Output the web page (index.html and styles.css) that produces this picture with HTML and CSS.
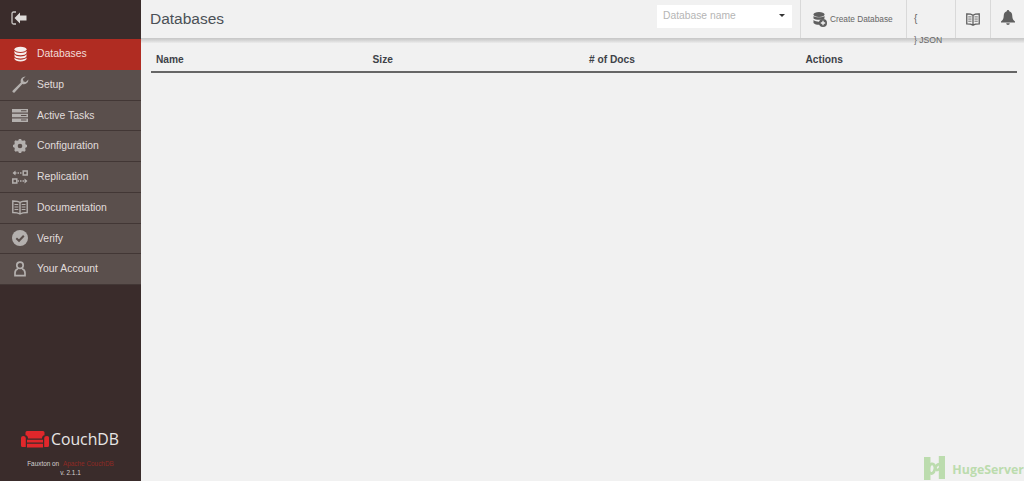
FILE: index.html
```html
<!DOCTYPE html>
<html lang="en">
<head>
<meta charset="utf-8">
<title>Databases</title>
<link rel="stylesheet" href="styles.css">
</head>
<body>
<div class="app">
  <aside class="sidebar">
    <div class="side-top">
      <svg class="collapse" width="16" height="14" viewBox="0 0 16 14"><path d="M5 1H2.500A1.500 1.500 0 0 0 1 2.500V11.500A1.500 1.500 0 0 0 2.500 13H5" fill="none" stroke="#c9c5c3" stroke-width="1.300"/><path d="M3.500 7L9 1.500V4.500H15.500V9.500H9V12.500Z" fill="#dedbd9"/></svg>
    </div>
    <nav class="nav">
      <a class="nav-item active"><span class="nav-icon"><svg width="13" height="16" viewBox="0 0 14 16" fill="#f6eeec"><ellipse cx="7" cy="3" rx="6.500" ry="2.800"/><path d="M.5 4.600C1.500 6.400 4 7 7 7s5.500-.6 6.500-2.400V7c-.6 1.800-3.400 2.400-6.500 2.400S1.100 8.800.5 7Z"/><path d="M.5 8.400C1.500 10.100 4 10.700 7 10.700s5.500-.6 6.500-2.300V10.500c-.6 1.800-3.400 2.400-6.500 2.400S1.100 12.300.5 10.500Z"/><path d="M.5 11.900C1.500 13.500 4 14.100 7 14.100s5.500-.6 6.500-2.200V13.400C13 15 10.100 16 7 16S1 15 .5 13.400Z"/></svg></span>Databases</a>
      <a class="nav-item"><span class="nav-icon"><svg width="17" height="17" viewBox="0 0 17 17" fill="#b4b0ae"><path d="M16.500 3.500a4.700 4.700 0 0 1-6.100 4.500L2.800 16.200a1.300 1.300 0 0 1-2-1.700L8.900 6.600A4.700 4.700 0 0 1 13.600.4L10.900 3.100l.6 2.400 2.300.6Z"/></svg></span>Setup</a>
      <a class="nav-item"><span class="nav-icon"><svg width="16" height="13" viewBox="0 0 16 13"><path fill="#b4b0ae" d="M0 0H16V3.600H0ZM0 4.700H16V8.300H0ZM0 9.400H16V13H0Z"/><path fill="#5a4f4c" d="M9 1.200H14.500V2.200H9ZM9 5.900H14.500V6.900H9ZM9 10.600H14.500V11.600H9Z"/></svg></span>Active Tasks</a>
      <a class="nav-item"><span class="nav-icon"><svg width="14" height="14" viewBox="0 0 14 14"><circle cx="7" cy="7" r="4.300" fill="none" stroke="#b4b0ae" stroke-width="3.400"/><path d="M7 0V14M0 7H14M2 2L12 12M12 2L2 12" stroke="#b4b0ae" stroke-width="2.600"/><circle cx="7" cy="7" r="2.300" fill="#5a4f4c"/></svg></span>Configuration</a>
      <a class="nav-item"><span class="nav-icon"><svg width="16" height="14" viewBox="0 0 16 14" fill="none" stroke="#b4b0ae" stroke-width="1.500"><rect x="11.200" y="1" width="4" height="4"/><rect x=".8" y="9" width="4" height="4"/><path d="M3 3H10M5.500 11H13" stroke-dasharray="1.500 1"/><path d="M3.500 .6L.5 3l3 2.400ZM12.500 8.600l3 2.400-3 2.400Z" fill="#b4b0ae" stroke="none"/></svg></span>Replication</a>
      <a class="nav-item"><span class="nav-icon"><svg width="16" height="15" viewBox="0 0 16 15" fill="none" stroke="#b4b0ae" stroke-width="1.400"><path d="M8 2.500C6 1 3 1 .8 1V12.500C3 12.500 6 12.700 8 14 10 12.700 13 12.500 15.200 12.500V1C13 1 10 1 8 2.500ZM8 2.500V14"/><path stroke-width="1" d="M2.500 4.500H6.300M2.500 7H6.300M2.500 9.500H6.300M9.700 4.500H13.500M9.700 7H13.500M9.700 9.500H13.500"/></svg></span>Documentation</a>
      <a class="nav-item"><span class="nav-icon"><svg width="16" height="16" viewBox="0 0 16 16"><circle cx="8" cy="8" r="8" fill="#b4b0ae"/><path d="M4.300 8.300L7 10.800 11.800 5.700" fill="none" stroke="#5a4f4c" stroke-width="2"/></svg></span>Verify</a>
      <a class="nav-item"><span class="nav-icon"><svg width="12" height="16" viewBox="0 0 12 16" fill="none" stroke="#b4b0ae" stroke-width="1.700"><circle cx="6" cy="4.300" r="3.200"/><path d="M4 7.800C2 8.400 1 9.800 1 12V14.700H11V12C11 9.800 10 8.400 8 7.800"/></svg></span>Your Account</a>
    </nav>
    <div class="side-foot">
      <div class="logo">
        <svg width="28" height="17" viewBox="0 0 28 17" fill="#e0272b"><path d="M4.500 1.500Q4.500 0 6 0H22Q23.500 0 23.500 1.500V4.200Q21 4.500 21 7.500H7Q7 4.500 4.500 4.200Z"/><path d="M0 7Q0 5 2.300 5T4.800 7V16H1.500Q0 16 0 14.500ZM23.200 7Q23.200 5 25.700 5T28 7V14.500Q28 16 26.500 16H23.200Z"/><path d="M6 8.800H22V11.500H6ZM6 12.700H22V16.500H6Z"/></svg>
        <span class="logo-text">CouchDB</span>
      </div>
      <div class="credit">Fauxton on <a class="credit-link">Apache CouchDB</a></div>
      <div class="credit">v. 2.1.1</div>
    </div>
  </aside>
  <main class="main">
    <header class="topbar">
      <h1 class="title">Databases</h1>
      <div class="db-select"><span class="db-placeholder">Database name</span><i class="caret"></i></div>
      <div class="tool create"><svg width="14" height="15" viewBox="0 0 14 15"><g fill="#5f5f5f"><ellipse cx="6" cy="2.500" rx="5.500" ry="2.400"/><path d="M.5 4C2 5.800 10 5.800 11.500 4V6.500C10 8.300 2 8.300 .5 6.500ZM.5 8C2 9.800 6 9.800 7 9.600V12.800C5 13 1.500 12.500 .5 11Z"/><circle cx="10" cy="11" r="4"/></g><path d="M10 8.800V13.200M7.800 11H12.200" stroke="#f1f1f1" stroke-width="1.300"/></svg><span>Create Database</span></div>
      <div class="tool json"><span class="brace">{</span><span class="brace-end">} JSON</span></div>
      <div class="tool icon-tool"><svg width="14" height="13" viewBox="0 0 16 15" fill="none" stroke="#5f5f5f" stroke-width="1.500"><path d="M8 2.500C6 1 3 1 .8 1V12.500C3 12.500 6 12.700 8 14 10 12.700 13 12.500 15.200 12.500V1C13 1 10 1 8 2.500ZM8 2.500V14"/><path stroke-width="1" d="M2.500 4.500H6.300M2.500 7H6.300M2.500 9.500H6.300M9.700 4.500H13.500M9.700 7H13.500M9.700 9.500H13.500"/></svg></div>
      <div class="tool icon-tool bell"><svg class="bell-icon" width="14" height="15" viewBox="0 0 14 15" fill="#5f5f5f"><path d="M7 0A1.200 1.200 0 0 1 8.200 1.300C10.500 1.900 11.300 3.800 11.300 6.200 11.300 9 12.500 10.300 14 11.500V12.500H0V11.500C1.500 10.300 2.700 9 2.700 6.200 2.700 3.800 3.500 1.900 5.800 1.300A1.200 1.200 0 0 1 7 0ZM5.200 13.200H8.800A1.800 1.800 0 0 1 5.200 13.200Z"/></svg></div>
    </header>
    <div class="content">
      <div class="thead"><span>Name</span><span>Size</span><span># of Docs</span><span>Actions</span></div>
    </div>
    <div class="watermark">
      <svg width="23" height="26" viewBox="0 0 23 26" fill="none"><path d="M3.500 1V26M19.500 0V25" stroke="#bcdcae" stroke-width="7"/><path d="M5 13C6 8 10 7 11.500 11S13 17 18 13" stroke="#bcdcae" stroke-width="3"/><path d="M5 17C8 21 11 18 11.500 15S14 8 18 9" stroke="#bcdcae" stroke-width="3"/></svg>
      <span class="watermark-text">HugeServer</span>
    </div>
  </main>
</div>
</body>
</html>
```
FILE: styles.css
```css
* { box-sizing: border-box; }
html, body { margin: 0; height: 100%; }
body { font-family: "Liberation Sans", Arial, sans-serif; background: #f1f1f1; overflow: hidden; }
.app { display: flex; height: 481px; }

.sidebar { width: 141px; flex: none; background: #3a2c2b; display: flex; flex-direction: column; }
.side-top { height: 39px; display: flex; align-items: center; padding: 0 0 3px 11px; }
.nav { display: flex; flex-direction: column; }
.nav-item { height: 30.75px; display: flex; align-items: center; background: #5a4f4c; border-bottom: 1px solid #423735; color: #e0dddc; font-size: 10.400px; padding-bottom: 0.400px; }
.nav-item.active { background: #b02c22; border-bottom-color: #b02c22; color: #f2dcd9; }
.nav-icon { width: 37px; flex: none; display: flex; justify-content: center; padding-left: 6px; padding-right: 3px; }
.side-foot { margin-top: auto; padding-bottom: 4px; text-align: center; }
.logo { display: flex; align-items: center; justify-content: center; gap: 2px; margin-bottom: 10px; padding-right: 1px; }
.logo-text { font-family: "Open Sans", sans-serif; font-size: 15.800px; line-height: 20px; color: #e8e6e5; }
.credit { font-size: 6.400px; line-height: 9px; color: #d5d2d1; }
.credit-link { color: #8f2a24; margin-left: 2px; }

.main { flex: 1; min-width: 0; position: relative; display: flex; flex-direction: column; }
.topbar { height: 43px; flex: none; display: flex; align-items: flex-start; background: #f1f1f1; position: relative; }
.topbar::after { content: ""; position: absolute; left: 0; right: 0; top: 38px; height: 5px; background: linear-gradient(#c6c6c6, #d2d2d2 40%, #ececec); }
.title { margin: 0 auto 0 0; padding: 9px 0 0 9px; font-size: 15.500px; line-height: 20px; font-weight: 400; color: #4b5056; }
.db-select { width: 135px; height: 23px; margin: 5px 8px 0 0; background: #fff; display: flex; align-items: center; justify-content: space-between; padding: 0 6px 2px; font-size: 10.300px; color: #b5b5b5; }
.caret { width: 0; height: 0; border: 3.500px solid transparent; border-top-color: #333; border-bottom-width: 0; margin-right: 1px; }
.tool { height: 38px; border-left: 1px solid #d9d9d9; display: flex; align-items: center; position: relative; z-index: 1; color: #666; }
.create { width: 106px; gap: 3px; padding-left: 12px; font-size: 8.300px; }
.json { width: 49px; display: block; padding-left: 7px; font-size: 8.600px; }
.brace { display: block; font-size: 10px; line-height: 12px; padding-top: 13px; }
.brace-end { display: block; line-height: 12px; margin-top: 9px; white-space: nowrap; }
.icon-tool { width: 35px; justify-content: center; }
.bell { width: 34px; }
.bell-icon { margin-bottom: 3px; }
.content { flex: 1; padding: 0 7px 0 10px; }
.thead { display: grid; grid-template-columns: repeat(4, 216.500px); height: 30px; border-bottom: 2px solid #666; align-items: center; font-size: 10.200px; font-weight: 700; color: #3e4248; padding-left: 5px; padding-top: 5px; }
.watermark { position: absolute; right: 0; bottom: 0; display: flex; align-items: flex-end; gap: 7px; height: 26px; width: 100px; color: #bcdcae; }
.watermark-text { font-family: "Open Sans", sans-serif; font-weight: 700; font-size: 12.400px; line-height: 22px; white-space: nowrap; }
```
